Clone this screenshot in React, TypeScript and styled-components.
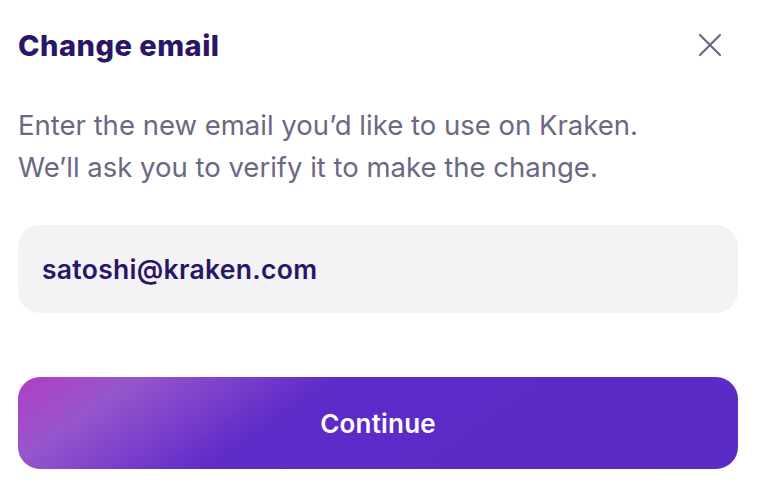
import React from "react";
import styled, { createGlobalStyle } from "styled-components";

const Global = createGlobalStyle`
  html, body { margin: 0; padding: 0; background: #ffffff; }
  body { font-family: Inter, "Noto Sans", sans-serif; -webkit-font-smoothing: antialiased; }
`;

const Dialog = styled.div`
  width: 766px;
  height: 492px;
  box-sizing: border-box;
  padding: 0 28px 0 18px;
  display: flex;
  flex-direction: column;
  background: #ffffff;
`;

const Header = styled.div`
  height: 90px;
  display: flex;
  align-items: center;
  justify-content: space-between;
`;

const Title = styled.h1`
  margin: 0;
  font-size: 29px;
  font-weight: 800;
  letter-spacing: 0.5px;
  color: #2a1568;
`;

const CloseButton = styled.button`
  width: 32px;
  height: 32px;
  margin-right: 12px;
  padding: 0;
  border: none;
  background: transparent;
  display: flex;
  align-items: center;
  justify-content: center;
  color: #6b6883;
  cursor: pointer;
`;

const Description = styled.p`
  margin: 14px 0 0;
  font-size: 27.5px;
  line-height: 42px;
  font-weight: 400;
  letter-spacing: 0;
  color: #6b6885;
`;

const Input = styled.input`
  margin-top: 37px;
  height: 88px;
  box-sizing: border-box;
  width: 100%;
  padding: 0 24px;
  border: none;
  outline: none;
  border-radius: 22px;
  background: #f3f3f5;
  font-family: Inter, "Noto Sans", sans-serif;
  font-size: 26.5px;
  font-weight: 600;
  letter-spacing: 0.3px;
  color: #2a1568;
`;

const PrimaryButton = styled.button`
  margin-top: 64px;
  height: 92px;
  width: 100%;
  border: none;
  border-radius: 22px;
  background: linear-gradient(
    145deg,
    #b03ec6 0%,
    #9656cb 14%,
    #7b3fcb 26%,
    #5d2bc7 38%,
    #5b2bc6 100%
  );
  font-family: Inter, "Noto Sans", sans-serif;
  font-size: 26px;
  font-weight: 600;
  letter-spacing: 0.2px;
  color: #ffffff;
  cursor: pointer;
`;

export default function App() {
  return (
    <>
      <Global />
      <Dialog>
        <Header>
          <Title>Change email</Title>
          <CloseButton aria-label="Close">
            <svg width="24" height="24" viewBox="0 0 24 24" fill="none">
              <path
                d="M2 2 L22 22 M22 2 L2 22"
                stroke="currentColor"
                strokeWidth="2.2"
                strokeLinecap="round"
              />
            </svg>
          </CloseButton>
        </Header>
        <Description>
          Enter the new email you’d like to use on Kraken.
          <br />
          We’ll ask you to verify it to make the change.
        </Description>
        <Input defaultValue="satoshi@kraken.com" />
        <PrimaryButton>Continue</PrimaryButton>
      </Dialog>
    </>
  );
}
